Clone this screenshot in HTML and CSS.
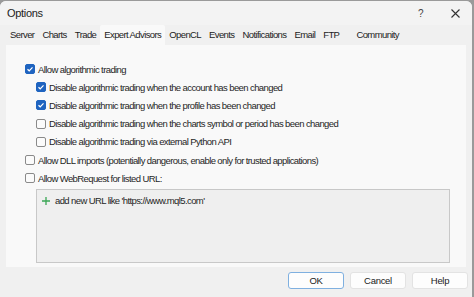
FILE: index.html
```html
<!DOCTYPE html>
<html lang="en">
<head>
  <meta charset="UTF-8" />
  <title>Options</title>
  <link rel="stylesheet" href="styles.css">
</head>
<body>
  <div class="dialog">
    <div class="titlebar">
      <span class="title">Options</span>
      <span class="help-btn">?</span>
      <svg class="close-btn" width="9" height="9" viewBox="0 0 9 9">
        <path d="M0.5 0.5L8.5 8.5M8.5 0.5L0.5 8.5" stroke="#333" stroke-width="1.1" fill="none"/>
      </svg>
    </div>

    <div class="tabs">
      <span class="tab">Server</span>
      <span class="tab">Charts</span>
      <span class="tab">Trade</span>
      <span class="tab active">Expert Advisors</span>
      <span class="tab">OpenCL</span>
      <span class="tab">Events</span>
      <span class="tab">Notifications</span>
      <span class="tab">Email</span>
      <span class="tab">FTP</span>
      <span class="tab community">Community</span>
    </div>

    <div class="panel">
      <label class="option"><span class="box checked"></span>Allow algorithmic trading</label>
      <label class="option sub"><span class="box checked"></span>Disable algorithmic trading when the account has been changed</label>
      <label class="option sub"><span class="box checked"></span>Disable algorithmic trading when the profile has been changed</label>
      <label class="option sub"><span class="box"></span>Disable algorithmic trading when the charts symbol or period has been changed</label>
      <label class="option sub"><span class="box"></span>Disable algorithmic trading via external Python API</label>
      <label class="option"><span class="box"></span>Allow DLL imports (potentially dangerous, enable only for trusted applications)</label>
      <label class="option"><span class="box"></span>Allow WebRequest for listed URL:</label>

      <div class="url-list">
        <div class="url-row">
          <svg class="plus" width="8" height="8" viewBox="0 0 8 8">
            <path d="M4 0V8M0 4H8" stroke="#3aa655" stroke-width="1.3"/>
          </svg>
          add new URL like 'https://www.mql5.com'
        </div>
      </div>
    </div>

    <div class="buttons">
      <button class="btn default">OK</button>
      <button class="btn">Cancel</button>
      <button class="btn">Help</button>
    </div>
  </div>
</body>
</html>
```

FILE: styles.css
```css
* {
  box-sizing: border-box;
  margin: 0;
  padding: 0;
}

body {
  width: 474px;
  height: 297px;
  background: #9a9a9a;
  font-family: 'Liberation Sans', Arial, sans-serif;
  font-size: 9.5px;
  letter-spacing: -0.6px;
  color: #1f1f1f;
  overflow: hidden;
}

.dialog {
  width: 472px;
  height: 297px;
  margin-top: 1px;
  background: #f0f0f0;
  border-radius: 6px 6px 0 0;
  display: flex;
  flex-direction: column;
}

.titlebar {
  height: 24px;
  display: flex;
  align-items: center;
  padding: 0 12px 0 7px;
  background: #f3f3f3;
  border-radius: 6px 6px 0 0;
}

.title {
  flex: 1;
  font-size: 11px;
  letter-spacing: -0.3px;
  color: #222;
}

.help-btn {
  font-size: 10px;
  color: #444;
  margin-right: 28px;
}

.tabs {
  display: flex;
  align-items: flex-end;
  height: 20px;
  padding-left: 6px;
}

.tab {
  padding: 0 4px 4px 4px;
  line-height: 13px;
  color: #222;
}

.tab.active {
  background: #f9f9f9;
  padding: 3px 4px 5px 4px;
  margin-bottom: -1px;
  border-radius: 2px 2px 0 0;
}

.tab.community {
  margin-left: 9px;
}

.panel {
  margin: 0 6px;
  height: 222px;
  background: #f9f9f9;
  padding: 15px 0 0 19px;
  display: flex;
  flex-direction: column;
}

.option {
  display: flex;
  align-items: center;
  height: 18.2px;
  white-space: nowrap;
}

.option.sub {
  padding-left: 11px;
}

.box {
  width: 10px;
  height: 10px;
  margin-right: 3px;
  border: 1px solid #8a8a8a;
  border-radius: 2px;
  background: #fbfbfb;
  flex-shrink: 0;
}

.box.checked {
  border-color: #1f64c0;
  background: #1f64c0 url("data:image/svg+xml;utf8,<svg xmlns='http://www.w3.org/2000/svg' width='8' height='8' viewBox='0 0 8 8'><path d='M1.5 4.2L3.2 5.8L6.5 2.3' stroke='white' stroke-width='1.2' fill='none'/></svg>") center / 8px 8px no-repeat;
}

.url-list {
  margin: 2px 0 0 11px;
  width: 414px;
  height: 74px;
  background: #efefef;
  border: 1px solid #c8c8c8;
  padding: 4px 0 0 5px;
}

.url-row {
  display: flex;
  align-items: center;
  gap: 5px;
  line-height: 13px;
}

.buttons {
  display: flex;
  justify-content: flex-end;
  gap: 6px;
  padding: 5px 4px 0 0;
}

.btn {
  width: 56px;
  height: 17px;
  font-family: inherit;
  font-size: 9.5px;
  letter-spacing: -0.3px;
  color: #222;
  background: #fdfdfd;
  border: 1px solid #e3e3e3;
  border-radius: 3px;
}

.btn.default {
  border-color: #7fb0e0;
}
```
